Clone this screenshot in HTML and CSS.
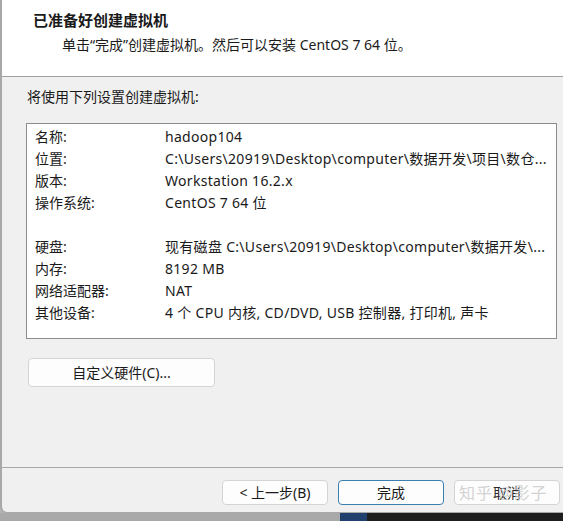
FILE: index.html
```html
<!DOCTYPE html>
<html lang="zh-CN">
<head>
  <meta charset="UTF-8">
  <title>新建虚拟机向导</title>
  <link rel="stylesheet" href="styles.css">
</head>
<body>
  <div class="window">
    <div class="header">
      <div class="title">已准备好创建虚拟机</div>
      <div class="subtitle">单击“完成”创建虚拟机。然后可以安装 CentOS 7 64 位。</div>
    </div>

    <div class="content">
      <p class="intro">将使用下列设置创建虚拟机:</p>
      <div class="summary">
        <div class="row"><span class="label">名称:</span><span class="value">hadoop104</span></div>
        <div class="row"><span class="label">位置:</span><span class="value">C:\Users\20919\Desktop\computer\数据开发\项目\数仓...</span></div>
        <div class="row"><span class="label">版本:</span><span class="value">Workstation 16.2.x</span></div>
        <div class="row"><span class="label">操作系统:</span><span class="value">CentOS 7 64 位</span></div>
        <div class="row"></div>
        <div class="row"><span class="label">硬盘:</span><span class="value">现有磁盘 C:\Users\20919\Desktop\computer\数据开发\...</span></div>
        <div class="row"><span class="label">内存:</span><span class="value">8192 MB</span></div>
        <div class="row"><span class="label">网络适配器:</span><span class="value">NAT</span></div>
        <div class="row"><span class="label">其他设备:</span><span class="value">4 个 CPU 内核, CD/DVD, USB 控制器, 打印机, 声卡</span></div>
      </div>
      <button class="btn btn-custom">自定义硬件(C)...</button>
    </div>

    <div class="footer">
      <button class="btn">&lt; 上一步(B)</button>
      <button class="btn btn-primary">完成</button>
      <button class="btn btn-cancel">取消<span class="watermark">知乎 @影子</span></button>
    </div>
  </div>
  <div class="taskbar">
    <div class="tb-gray"></div>
    <div class="tb-blue"></div>
    <div class="tb-dark"></div>
  </div>
</body>
</html>
```

FILE: styles.css
```css
body {
  margin: 0;
  width: 563px;
  height: 521px;
  overflow: hidden;
  background: #b4b4b4;
  font-family: "Noto Sans", "Noto Sans CJK SC", sans-serif;
  font-size: 14px;
  color: #1a1a1a;
}

.window {
  height: 513px;
  display: flex;
  flex-direction: column;
  background: #f0f0f0;
  border-left: 2px solid #a8a8a8;
  border-bottom: 1px solid #a8a8a8;
  border-bottom-left-radius: 7px;
  box-sizing: border-box;
  overflow: hidden;
}

.header {
  height: 77px;
  flex-shrink: 0;
  background: #fff;
  border-bottom: 1px solid #a0a0a0;
  box-sizing: border-box;
  padding: 9px 0 0 31px;
}

.title {
  font-size: 15px;
  font-weight: bold;
  line-height: 22px;
}

.subtitle {
  line-height: 22px;
  margin-top: 3px;
  padding-left: 29px;
}

.content {
  flex: 1;
  padding: 9px 6px 0 24px;
}

.intro {
  margin: 0;
  padding-left: 1px;
  line-height: 22px;
}

.summary {
  margin-top: 15px;
  height: 216px;
  box-sizing: border-box;
  background: #fff;
  border: 1px solid #8c8c8c;
  padding: 2px 0 0 8px;
}

.row {
  display: flex;
  height: 22px;
  line-height: 22px;
  white-space: nowrap;
}

.label {
  width: 130px;
  flex-shrink: 0;
}

.value {
  letter-spacing: 0.3px;
}

.btn {
  font-family: inherit;
  font-size: 14px;
  color: #1a1a1a;
  background: #fdfdfd;
  border: 1px solid #d4d4d4;
  border-radius: 4px;
  height: 25px;
  width: 106px;
  padding: 0;
  line-height: 23px;
}

.btn-custom {
  display: block;
  width: 187px;
  height: 29px;
  line-height: 27px;
  margin: 19px 0 0 2px;
}

.footer {
  height: 45px;
  box-sizing: border-box;
  flex-shrink: 0;
  border-top: 1px solid #a8a8a8;
  display: flex;
  justify-content: flex-end;
  align-items: flex-start;
  gap: 10px;
  padding: 12px 3px 0 0;
}

.btn-primary {
  border-color: #3c7fb1;
}

.btn-cancel {
  position: relative;
  color: #2a2a2a;
}

.watermark {
  position: absolute;
  left: 4px;
  top: 1px;
  font-size: 16px;
  color: rgba(200, 200, 200, 0.8);
  letter-spacing: 1px;
  white-space: nowrap;
}

.taskbar {
  display: flex;
  height: 8px;
}

.tb-gray {
  width: 340px;
  background: #a9a9a9;
}

.tb-blue {
  width: 27px;
  background: #20406e;
}

.tb-dark {
  flex: 1;
  background: #1e1e1e;
}
```
